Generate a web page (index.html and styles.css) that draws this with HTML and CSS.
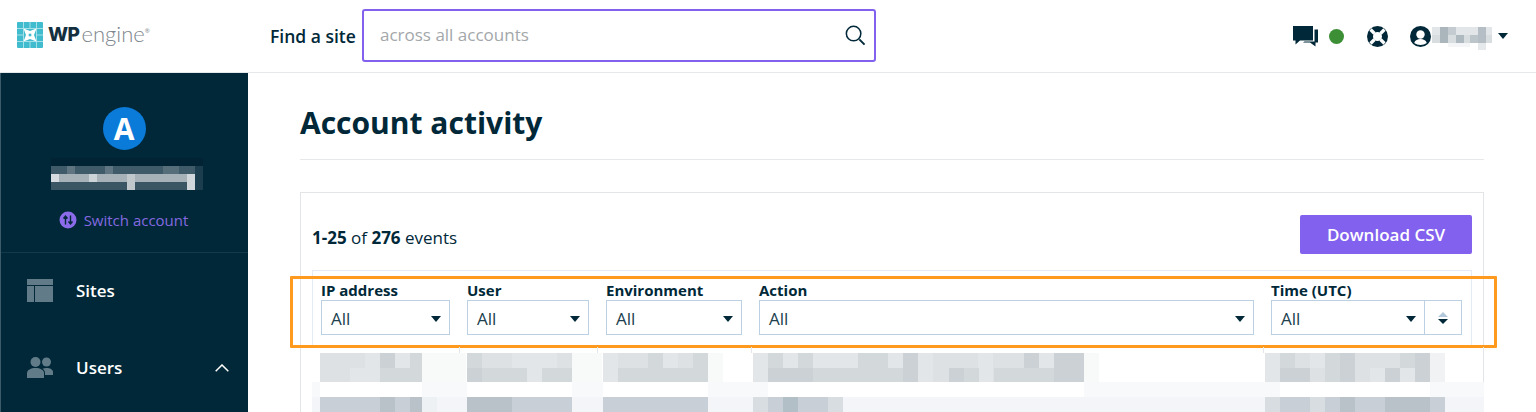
FILE: index.html
```html
<!DOCTYPE html>
<html>
<head>
    <meta charset="UTF-8">
    <link rel="stylesheet" href="styles.css">
    <title>Account activity</title>
</head>
<body>
    <!-- top bar -->
    <header class="topbar">
        <div class="logo">
            <svg class="logo-mark" width="26" height="26" viewBox="0 0 26 26">
                <rect width="26" height="26" rx="1" fill="#41bccf"/>
                <path d="M0 6.5h26M0 19.5h26M6.5 0v26M19.5 0v26M13 0v6M13 20v6M0 13h6M20 13h6" stroke="#a5dfe8" stroke-width="1"/>
                <path d="M6.5 6.5l6.5 2.5 6.5-2.5-2.5 6.5 2.5 6.5-6.5-2.5-6.5 2.5 2.5-6.5z" fill="#fff"/>
                <rect x="11.7" y="11.7" width="2.6" height="2.6" fill="#41bccf"/>
            </svg>
            <span class="logo-wp">WP</span><span class="logo-engine">engine</span><span class="logo-reg">®</span>
        </div>
        <label class="find-label">Find a site</label>
        <div class="search">
            <span class="search-text">across all accounts</span>
            <svg width="21" height="21" viewBox="0 0 22 22" fill="none" stroke="#002838">
                <circle cx="9" cy="9" r="7.6" stroke-width="1.6"/>
                <path d="M15 15l5.5 5.5" stroke-width="2"/>
            </svg>
        </div>
        <div class="topbar-right">
            <svg class="chat-icon" width="25" height="22" viewBox="0 0 25 22" fill="#002838">
                <path d="M0 1h20v14.500h-13l-4.500 4v-4h-2.500z"/>
                <path d="M21.500 4.500h3.500v13h-2.500v4l-5.500-4h-7l1.500-1h10z"/>
            </svg>
            <span class="status-dot"></span>
            <svg class="help-icon" width="21" height="21" viewBox="0 0 21 21">
                <circle cx="10.500" cy="10.500" r="10.500" fill="#002838"/>
                <path d="M3.500 3.500l4 4M17.500 3.500l-4 4M3.500 17.500l4-4M17.500 17.500l-4-4" stroke="#fff" stroke-width="3.200"/>
                <circle cx="10.500" cy="10.500" r="4.500" fill="#fff"/>
            </svg>
            <svg class="user-icon" width="21" height="21" viewBox="0 0 21 21">
                <circle cx="10.500" cy="10.500" r="10.500" fill="#002838"/>
                <circle cx="10.500" cy="8.500" r="4.200" fill="#fff"/>
                <path d="M4.200 17c1-3 3.500-4 6.300-4s5.300 1 6.300 4c-3.500 2.500-9 2.500-12.600 0z" fill="#fff"/>
            </svg>
            <svg class="user-name" width="60" height="27" viewBox="0 0 60 27" shape-rendering="crispEdges">
                <rect y="4" width="60" height="8" fill="#e3e6e9"/>
                <rect y="12" width="60" height="8" fill="#d8dde0"/>
                <rect x="8" y="4" width="8" height="16" fill="#aab5bc"/>
                <rect x="16" y="4" width="8" height="8" fill="#c5ccd1"/>
                <rect x="24" y="12" width="8" height="8" fill="#aeb9bf"/>
                <rect x="38" y="12" width="8" height="8" fill="#bcc5ca"/>
                <rect x="46" y="4" width="8" height="16" fill="#b4bec4"/>
                <rect x="46" y="20" width="8" height="7" fill="#e6e9eb"/>
                <rect x="16" y="20" width="22" height="4" fill="#f4f5f6"/>
            </svg>
            <span class="caret caret-user"></span>
        </div>
    </header>

    <div class="page">
        <!-- left nav -->
        <nav class="sidebar">
            <div class="account">
                <div class="account-badge">A</div>
                <svg class="account-name" width="152" height="32" viewBox="0 0 152 32" shape-rendering="crispEdges">
                    <rect width="152" height="8" fill="#012334"/>
                    <rect y="8" width="152" height="8" fill="#3f5a68"/>
                    <rect y="16" width="152" height="8" fill="#a6b2b8"/>
                    <rect y="24" width="152" height="8" fill="#3a5563"/>
                    <rect x="0" y="16" width="8" height="8" fill="#d6dcdf"/>
                    <rect x="38" y="16" width="8" height="8" fill="#cdd4d8"/>
                    <rect x="76" y="16" width="8" height="16" fill="#c0c8cc"/>
                    <rect x="136" y="16" width="8" height="16" fill="#d0d6d9"/>
                    <rect x="144" y="8" width="8" height="24" fill="#1b3d4e"/>
                    <rect x="16" y="8" width="8" height="8" fill="#5f7682"/>
                    <rect x="54" y="8" width="8" height="8" fill="#5f7682"/>
                    <rect x="112" y="8" width="16" height="8" fill="#566e7a"/>
                </svg>
                <a class="switch">
                    <svg width="18" height="18" viewBox="0 0 18 18">
                        <circle cx="9" cy="9" r="8.500" fill="#8b6bea"/>
                        <path d="M6.500 13.500v-8M4.500 7.500l2-2.500 2 2.500M11.500 4.500v8M9.500 10.500l2 2.500 2-2.500" fill="none" stroke="#002838" stroke-width="1.400"/>
                    </svg>
                    Switch account
                </a>
            </div>
            <a class="nav-item nav-sites">
                <svg width="26" height="23" viewBox="0 0 26 23" fill="#617c88">
                    <rect width="26" height="6"/>
                    <rect y="7" width="7" height="16"/>
                    <rect x="8" y="7" width="18" height="16"/>
                </svg>
                Sites
            </a>
            <a class="nav-item nav-users">
                <svg width="26" height="21" viewBox="0 0 26 21" fill="#617c88">
                    <circle cx="8.500" cy="5" r="5"/>
                    <circle cx="19.500" cy="5" r="4.500"/>
                    <path d="M0 21v-5c0-3 4-5 8.500-5s8.500 2 8.500 5v5z"/>
                    <path d="M18 18h8v-3c0-2.500-3-4-6.500-4-1.500 0-2.800.3-4 .8 1.500 1 2.500 2.500 2.500 4.200z"/>
                </svg>
                Users
                <svg class="chevron" width="14" height="8" viewBox="0 0 14 8" fill="none" stroke="#fff" stroke-width="1.500">
                    <path d="M.7 7.300l6.300-6.300 6.300 6.300"/>
                </svg>
            </a>
        </nav>

        <main class="content">
            <h1 class="title">Account activity</h1>
            <section class="card">
                <div class="card-head">
                    <p class="count"><b>1-25</b> of <b>276</b> events</p>
                    <button class="download">Download CSV</button>
                </div>
                <div class="table">
                    <div class="filters">
                        <div class="filter filter-ip">
                            <label>IP address</label>
                            <div class="select">All<span class="caret"></span></div>
                        </div>
                        <div class="filter filter-user">
                            <label>User</label>
                            <div class="select">All<span class="caret"></span></div>
                        </div>
                        <div class="filter filter-env">
                            <label>Environment</label>
                            <div class="select">All<span class="caret"></span></div>
                        </div>
                        <div class="filter filter-action">
                            <label>Action</label>
                            <div class="select">All<span class="caret"></span></div>
                        </div>
                        <div class="filter filter-time">
                            <label>Time (UTC)</label>
                            <div class="select-group">
                                <div class="select">All<span class="caret"></span></div>
                                <div class="sort">
                                    <span class="sort-up"></span>
                                    <span class="sort-down"></span>
                                </div>
                            </div>
                        </div>
                    </div>
                    <div class="highlight"></div>
                </div>
                <!-- redacted rows, x starts at 300 page px -->
                <svg class="rows" width="1236" height="65" viewBox="300 347 1236 65" shape-rendering="crispEdges">
                    <rect x="312" y="382" width="1172" height="15" fill="#f8f9fb"/>
                    <rect x="320" y="382" width="102" height="15" fill="#fff"/>
                    <rect x="467" y="382" width="105" height="15" fill="#fff"/>
                    <rect x="603" y="382" width="105" height="15" fill="#fff"/>
                    <rect x="768" y="382" width="316" height="15" fill="#fff"/>
                    <rect x="1280" y="382" width="150" height="15" fill="#fff"/>
                    <rect x="312" y="397" width="1172" height="15" fill="#f3f5f8"/>
                    <path d="M459 347v6M597 347v6M751 347v6M1263 347v6M1483 347v6" stroke="#e3e6ea" stroke-width="1"/>
                    <!-- row 1 -->
                    <path fill="#f8f9f9" d="M422 353h44v29h-44zM572 353h30v29h-30zM708 353h15v29h-15zM1084 353h15v29h-15z"/>
                    <path fill="#f1f2f3" d="M1430 353h15v29h-15z"/>
                    <path fill="#dde1e4" d="M320 353h102v29h-102zM467 353h105v29h-105zM603 353h105v29h-105zM753 353h331v29h-331zM1265 353h165v29h-165z"/>
                    <path fill="#e3e6e8" d="M365 353h15v29h-15zM350 368h15v14h-15zM395 353h15v15h-15zM512 353h45v15h-45zM527 368h15v14h-15zM603 353h15v29h-15zM663 353h15v15h-15zM753 353h15v29h-15zM783 353h15v15h-15zM813 353h45v15h-45zM888 353h15v15h-15zM918 353h15v29h-15zM978 353h15v29h-15zM1039 353h15v15h-15zM1265 353h15v29h-15zM1310 353h15v15h-15zM1370 368h15v14h-15zM1400 368h15v14h-15z"/>
                    <path fill="#d3d8db" d="M380 368h15v14h-15zM395 368h15v14h-15zM410 353h12v29h-12zM467 353h15v15h-15zM482 368h45v14h-45zM542 368h30v14h-30zM618 368h90v14h-90zM648 353h15v15h-15zM693 353h15v15h-15zM768 353h15v15h-15zM798 353h15v15h-15zM813 368h90v14h-90zM858 353h30v15h-30zM964 368h15v14h-15zM994 368h60v14h-60zM1280 353h15v15h-15zM1325 353h15v29h-15zM1400 353h15v15h-15z"/>
                    <path fill="#cbd1d5" d="M380 353h15v15h-15zM467 368h15v14h-15zM768 368h45v14h-45zM903 353h15v29h-15zM949 368h15v14h-15zM1024 353h15v15h-15zM1054 353h30v29h-30zM1280 368h30v14h-30zM1340 353h15v29h-15zM1385 368h15v14h-15zM1415 353h15v29h-15z"/>
                    <!-- row 2 -->
                    <path fill="#c8cfd6" d="M320 397h102v15h-102zM467 397h105v15h-105zM603 397h105v15h-105zM768 397h60v15h-60zM1265 397h180v15h-180z"/>
                    <path fill="#b9c1c9" d="M380 397h15v15h-15zM410 397h12v15h-12zM467 397h45v15h-45zM1340 397h15v15h-15zM1385 397h45v15h-45z"/>
                    <path fill="#b3bfc6" d="M783 397h15v15h-15z"/>
                    <path fill="#d8dde1" d="M753 397h15v15h-15zM828 397h15v15h-15zM1265 397h15v15h-15zM1310 397h15v15h-15z"/>
                    <path fill="#eef1f4" d="M422 397h15v15h-15z"/>
                </svg>
            </section>
        </main>
    </div>
</body>
</html>
```

FILE: styles.css
```css
*{
    box-sizing: border-box;
}
html, body{
    height: 100%;
    overflow: hidden;
}
body{
    margin: 0;
    font-family: "Open Sans", sans-serif;
    color: #002838;
    background-color: #fff;
    display: flex;
    flex-direction: column;
}

/* top bar */
.topbar{
    flex: none;
    height: 73px;
    display: flex;
    align-items: center;
    border-bottom: 1px solid #e6e9ec;
    padding-left: 17px;
    padding-right: 28px;
}
.logo{
    width: 253px;
    display: flex;
    align-items: center;
    height: 26px;
    margin-top: -3px;
}
.logo-mark{
    margin-right: 5px;
}
.logo-wp{
    font-family: Inter, sans-serif;
    font-weight: 800;
    font-size: 19px;
    letter-spacing: -0.5px;
    color: #14303f;
}
.logo-engine{
    font-family: Lato, sans-serif;
    font-weight: 300;
    font-size: 22px;
    color: #7d858c;
    margin-left: 2px;
    margin-top: -2px;
}
.logo-reg{
    font-size: 6px;
    color: #7d858c;
    align-self: flex-start;
    margin-top: 5px;
}
.find-label{
    font-weight: 600;
    font-size: 17.5px;
    width: 92px;
    white-space: nowrap;
    margin-top: -1px;
}
.search{
    width: 514px;
    height: 53px;
    border: 2px solid #8261ee;
    border-radius: 3px;
    display: flex;
    align-items: center;
    justify-content: space-between;
    padding: 0 8px 0 16px;
    margin-top: -2px;
}
.search-text{
    font-size: 17px;
    color: #a3a7aa;
    margin-top: -1px;
}
.topbar-right{
    margin-left: auto;
    display: flex;
    align-items: center;
}
.chat-icon{
    margin-right: 11px;
}
.status-dot{
    width: 15px;
    height: 15px;
    border-radius: 50%;
    background-color: #3d8f36;
    margin-right: 23px;
}
.help-icon{
    margin-right: 22px;
}
.user-name{
    margin-left: 1px;
    margin-right: 6px;
}
.caret{
    width: 0;
    height: 0;
    border-left: 5.5px solid transparent;
    border-right: 5.5px solid transparent;
    border-top: 6px solid #002838;
}

/* page */
.page{
    flex: 1;
    display: flex;
    min-height: 0;
}
.sidebar{
    flex: none;
    width: 248px;
    background-color: #002838;
    border-left: 1px solid #3c5a68;
    color: #fff;
}
.account{
    height: 180px;
    border-bottom: 1px solid #123a4a;
    display: flex;
    flex-direction: column;
    align-items: center;
    padding-top: 34px;
}
.account-badge{
    width: 43px;
    height: 43px;
    margin-left: -1px;
    border-radius: 50%;
    background-color: #0a7bd9;
    font-weight: 700;
    font-size: 30px;
    line-height: 43px;
    text-align: center;
}
.account-name{
    margin-top: 8px;
    margin-left: 5px;
}
.switch{
    display: flex;
    align-items: center;
    gap: 7px;
    margin-top: 20px;
    margin-left: -2px;
    font-size: 15px;
    color: #8468e0;
}
.nav-item{
    display: flex;
    align-items: center;
    font-weight: 600;
    font-size: 17px;
    padding-left: 26px;
    gap: 23px;
}
.nav-sites{
    margin-top: 26px;
}
.nav-users{
    margin-top: 54px;
}
.chevron{
    margin-left: auto;
    margin-right: 19px;
}

.content{
    flex: 1;
    min-width: 0;
    padding: 0 52px;
}
.title{
    margin: 0;
    height: 87px;
    padding-top: 28px;
    font-size: 30px;
    line-height: 44px;
    font-weight: 700;
    border-bottom: 1px solid #e6e9ec;
}
.card{
    position: relative;
    margin-top: 32px;
    height: 220px;
    border: 1px solid #e3e6e8;
    border-bottom: 0;
    padding: 22px 11px 0 11px;
}
.card-head{
    display: flex;
    justify-content: space-between;
    align-items: flex-start;
    height: 40px;
}
.count{
    margin: 11px 0 0 0;
    font-size: 17px;
}
.count b{
    font-weight: 700;
}
.download{
    width: 172px;
    height: 39px;
    border: 0;
    border-radius: 2px;
    background-color: #8261ee;
    color: #fff;
    font-family: "Open Sans", sans-serif;
    font-weight: 600;
    font-size: 17px;
}

/* filter row */
.table{
    position: relative;
    margin-top: 15px;
    height: 78px;
    border: 1px solid #e4ebf5;
    border-bottom: 0;
    padding: 9px 9px 0 8px;
}
.filters{
    display: flex;
    gap: 17px;
}
.filter label{
    display: block;
    font-weight: 700;
    font-size: 15px;
    line-height: 20px;
}
.filter-ip{
    width: 129px;
}
.filter-user{
    width: 122px;
}
.filter-env{
    width: 136px;
}
.filter-action{
    flex: 1;
}
.filter-time{
    width: 191px;
}
.select{
    height: 35px;
    border: 1px solid #bcd0e3;
    display: flex;
    align-items: center;
    justify-content: space-between;
    padding: 2px 8px 0 9px;
    font-size: 17px;
    color: #20404e;
}
.select-group{
    display: flex;
}
.select-group .select{
    flex: 1;
}
.sort{
    width: 37px;
    height: 35px;
    border: 1px solid #bcd0e3;
    border-left: 0;
    display: flex;
    flex-direction: column;
    align-items: center;
    justify-content: center;
    gap: 2px;
}
.sort-up{
    width: 0;
    height: 0;
    border-left: 5.5px solid transparent;
    border-right: 5.5px solid transparent;
    border-bottom: 5px solid #b4c8dc;
}
.sort-down{
    width: 0;
    height: 0;
    border-left: 5.5px solid transparent;
    border-right: 5.5px solid transparent;
    border-top: 5px solid #002838;
}
/* orange annotation drawn over the screenshot */
.highlight{
    position: absolute;
    left: -23px;
    top: 5px;
    width: 1207px;
    height: 72px;
    border: 3px solid #ff9a1f;
    border-radius: 1px;
}
.rows{
    position: absolute;
    left: -1px;
    top: 154px;
    display: block;
}
```
